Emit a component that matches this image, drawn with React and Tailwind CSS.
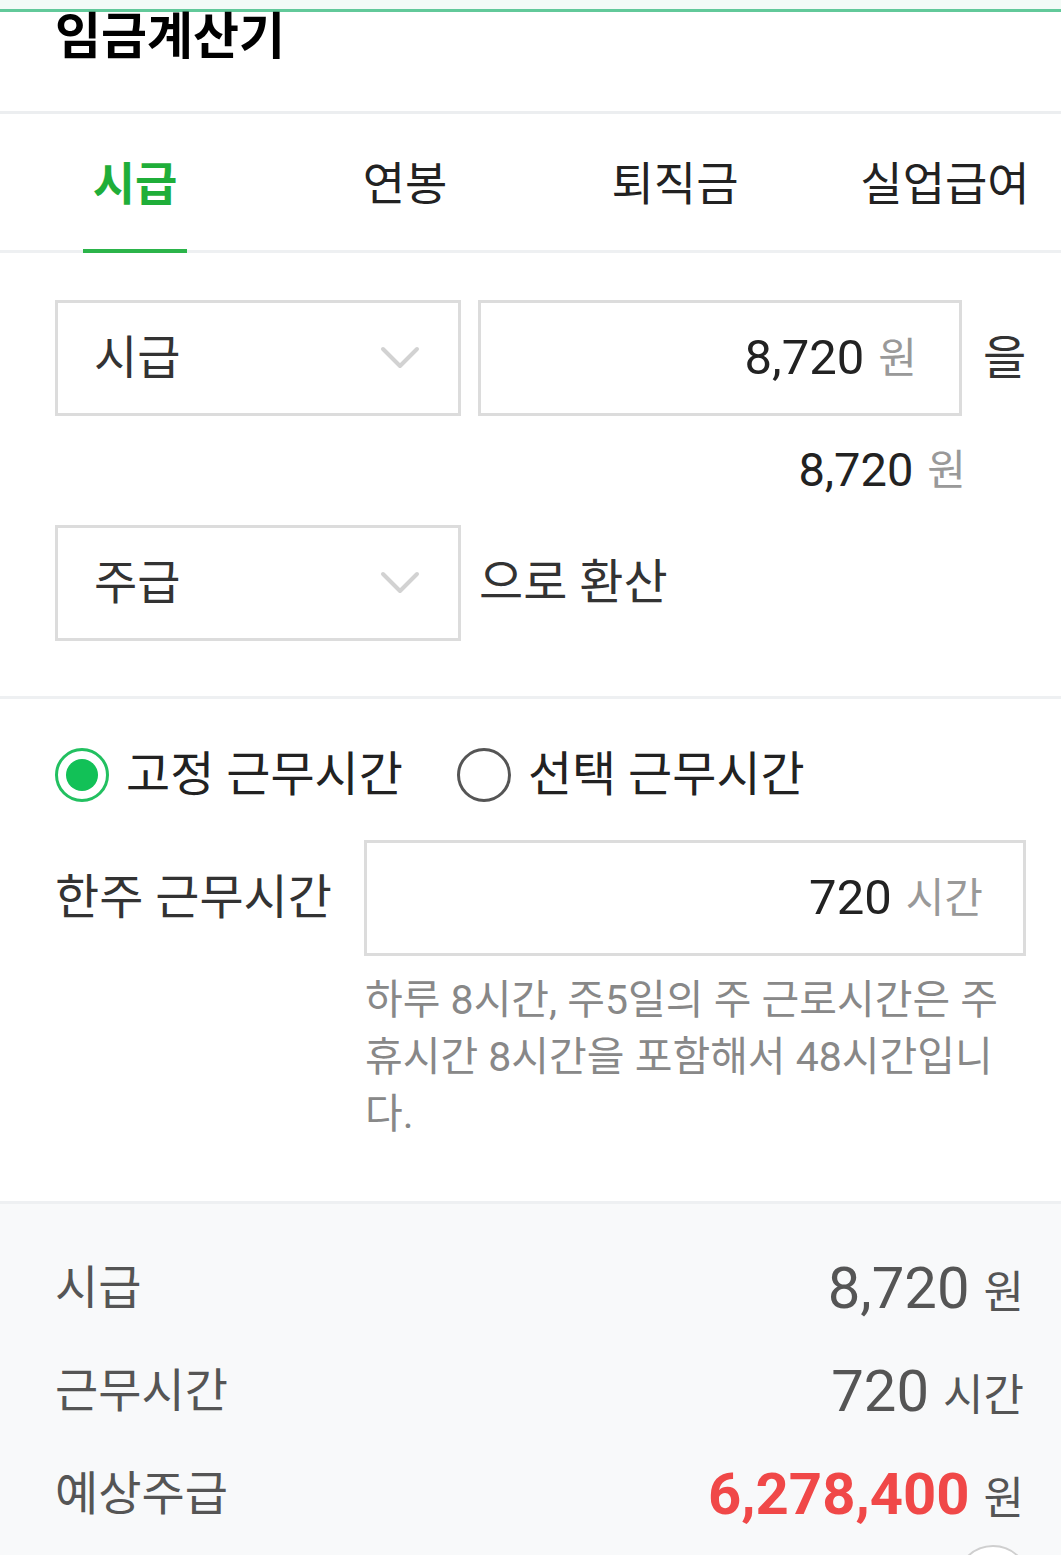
import React from "react";

const FONT = "font-['Roboto','Noto_Sans_CJK_KR',sans-serif]";

function Chevron() {
  return (
    <svg width="40" height="26" viewBox="0 0 40 26" fill="none">
      <polyline
        points="3,4 20,21 37,4"
        stroke="#d2d2d2"
        strokeWidth="4"
        strokeLinecap="round"
        strokeLinejoin="round"
      />
    </svg>
  );
}

function Select({ label }) {
  return (
    <div className="w-[406px] h-[116px] shrink-0 border-[3px] border-[#dcdcdc] flex items-center justify-between pl-[36px] pr-[38px]">
      <span className="text-[47px] text-[#333]">{label}</span>
      <Chevron />
    </div>
  );
}

function Radio({ checked, label }) {
  return (
    <div className="flex items-center gap-[17px]">
      {checked ? (
        <div className="w-[54px] h-[54px] rounded-full border-[3px] border-[#22c060] p-[8px]">
          <div className="w-full h-full rounded-full bg-[#12c157]" />
        </div>
      ) : (
        <div className="w-[54px] h-[54px] rounded-full border-[3px] border-[#555]" />
      )}
      <span className="text-[48px] text-[#222]">{label}</span>
    </div>
  );
}

function SummaryRow({ label, value, unit, red }) {
  return (
    <div className="flex items-center justify-between h-[103px]">
      <span className="text-[47px] text-[#555]">{label}</span>
      <span className="flex items-baseline">
        <span
          className={
            red
              ? "text-[58px] font-bold text-[#f04848]"
              : "text-[58px] text-[#555]"
          }
        >
          {value}
        </span>
        <span className="text-[44px] text-[#555] ml-[14px]">{unit}</span>
      </span>
    </div>
  );
}

export default function App() {
  const tabs = ["시급", "연봉", "퇴직금", "실업급여"];

  return (
    <div className={`${FONT} relative w-[1061px] h-[1555px] overflow-hidden bg-white`}>
      {/* header */}
      <div className="h-[9px] bg-[#f3fbf7]" />
      <div className="h-[3px] bg-[#62c99a]" />
      <div className="h-[99px] pl-[55px]">
        <h1 className="text-[50px] font-bold text-black leading-none">
          임금계산기
        </h1>
      </div>
      <div className="h-[3px] bg-[#eceef0]" />

      {/* tabs */}
      <div className="flex h-[139px] border-b-[3px] border-[#eef0f2]">
        {tabs.map((t, i) => (
          <div
            key={t}
            className="relative w-[270px] shrink-0 flex items-center justify-center pt-[4px]"
          >
            <span
              className={
                i === 0
                  ? "text-[46px] font-bold text-[#1fae39]"
                  : "text-[46px] text-[#222]"
              }
            >
              {t}
            </span>
            {i === 0 && (
              <span className="absolute bottom-[-3px] left-[83px] w-[104px] h-[4px] bg-[#2bb44a]" />
            )}
          </div>
        ))}
      </div>

      {/* conversion */}
      <div className="pl-[55px] pt-[47px] pb-[55px] border-b-[3px] border-[#eef0f2]">
        <div className="flex items-center">
          <Select label="시급" />
          <div className="ml-[17px] w-[484px] h-[116px] border-[3px] border-[#dcdcdc] flex items-center justify-end pr-[42px]">
            <span className="text-[49px] text-[#222]">8,720</span>
            <span className="text-[42px] text-[#999] ml-[14px]">원</span>
          </div>
          <span className="ml-[21px] text-[47px] text-[#333]">을</span>
        </div>
        <div className="w-[911px] h-[109px] flex items-center justify-end">
          <span className="text-[47px] text-[#222]">8,720</span>
          <span className="text-[42px] text-[#999] ml-[14px]">원</span>
        </div>
        <div className="flex items-center">
          <Select label="주급" />
          <span className="ml-[18px] text-[48px] text-[#333]">으로 환산</span>
        </div>
      </div>

      {/* hours */}
      <div className="pl-[55px] pt-[40px] pb-[58px] border-b-[3px] border-[#eef0f2]">
        <div className="flex items-center gap-[54px]">
          <Radio checked label="고정 근무시간" />
          <Radio label="선택 근무시간" />
        </div>
        <div className="flex items-center mt-[29px]">
          <span className="w-[309px] shrink-0 text-[48px] text-[#333]">
            한주 근무시간
          </span>
          <div className="w-[662px] h-[116px] border-[3px] border-[#dcdcdc] flex items-center justify-end pr-[40px]">
            <span className="text-[49px] text-[#222]">720</span>
            <span className="text-[42px] text-[#999] ml-[14px]">시간</span>
          </div>
        </div>
        <p className="ml-[310px] mt-[16px] w-[650px] text-[41px] leading-[57px] text-[#888]">
          하루 8시간, 주5일의 주 근로시간은 주휴시간 8시간을 포함해서
          48시간입니다.
        </p>
      </div>

      {/* summary */}
      <div className="bg-[#f8f9fa] pl-[55px] pr-[37px] pt-[33px] h-full">
        <SummaryRow label="시급" value="8,720" unit="원" />
        <SummaryRow label="근무시간" value="720" unit="시간" />
        <SummaryRow label="예상주급" value="6,278,400" unit="원" red />
      </div>

      {/* floating button */}
      <div className="absolute left-[956px] top-[1545px] w-[74px] h-[74px] rounded-full border-[2px] border-[#cfcfcf] bg-white" />
    </div>
  );
}
